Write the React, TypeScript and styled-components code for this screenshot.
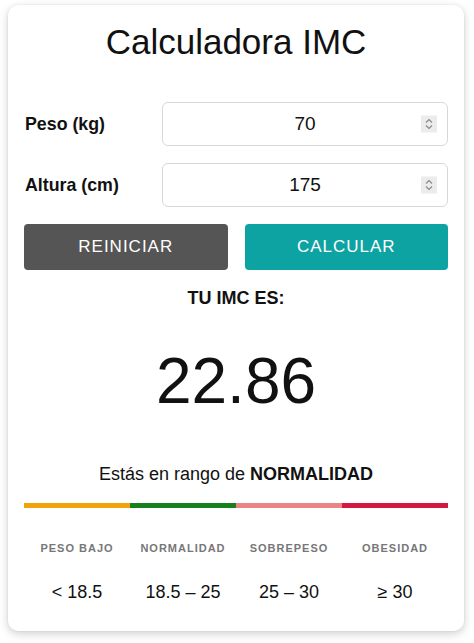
import React, { useState } from "react";
import styled, { createGlobalStyle } from "styled-components";

const GlobalStyle = createGlobalStyle`
  html, body {
    margin: 0;
    padding: 0;
    background: #ffffff;
  }
  body {
    font-family: "Liberation Sans", Arial, sans-serif;
    color: #111;
  }
`;

const Page = styled.div`
  padding: 5px 10px 13px 8px;
`;

const Card = styled.div`
  background: #fff;
  border-radius: 10px;
  box-shadow: 0 3px 10px rgba(0, 0, 0, 0.18), 0 0 3px rgba(0, 0, 0, 0.08);
  padding: 17px 16px 28px;
  display: flex;
  flex-direction: column;
`;

const Title = styled.h1`
  margin: 0 0 40px;
  font-size: 35px;
  font-weight: normal;
  text-align: center;
  line-height: 40px;
`;

const Form = styled.div`
  display: grid;
  grid-template-columns: 138px 1fr;
  row-gap: 17px;
  align-items: center;
`;

const Label = styled.label`
  font-size: 17.8px;
  font-weight: bold;
  padding-left: 1px;
`;

const Field = styled.div`
  position: relative;
  height: 44px;
  border: 1px solid #d8d8d8;
  border-radius: 6px;
  box-sizing: border-box;
`;

const Input = styled.input`
  width: 100%;
  height: 100%;
  border: none;
  outline: none;
  background: transparent;
  text-align: center;
  font-family: inherit;
  font-size: 19px;
  color: #111;
  padding: 0 30px;
  box-sizing: border-box;
`;

const Spinner = styled.span`
  position: absolute;
  right: 10px;
  top: 50%;
  transform: translateY(-50%);
  width: 16px;
  height: 17px;
  background: #ececec;
  display: flex;
  align-items: center;
  justify-content: center;
`;

const Buttons = styled.div`
  display: grid;
  grid-template-columns: 1fr 1fr;
  column-gap: 17px;
  margin-top: 17px;
`;

const Button = styled.button<{ $tone: "dark" | "teal" }>`
  height: 46px;
  border: none;
  border-radius: 4px;
  background: ${(p) => (p.$tone === "dark" ? "#555555" : "#0ea3a3")};
  color: #fff;
  font-family: inherit;
  font-size: 17px;
  letter-spacing: 1px;
  text-transform: uppercase;
  cursor: pointer;
`;

const ResultLabel = styled.div`
  margin-top: 17px;
  text-align: center;
  font-size: 18px;
  font-weight: bold;
  line-height: 22px;
`;

const Value = styled.div`
  margin-top: 36px;
  text-align: center;
  font-size: 64px;
  line-height: 72px;
`;

const Range = styled.div`
  margin-top: 46px;
  text-align: center;
  font-size: 18px;
  line-height: 22px;
  b {
    font-weight: bold;
  }
`;

const Bar = styled.div`
  margin-top: 18px;
  display: grid;
  grid-template-columns: repeat(4, 1fr);
  height: 5px;
`;

const Segment = styled.div<{ $color: string }>`
  background: ${(p) => p.$color};
`;

const Categories = styled.div`
  margin-top: 33px;
  display: grid;
  grid-template-columns: repeat(4, 1fr);
  row-gap: 26px;
  text-align: center;
`;

const CatName = styled.div`
  font-size: 11px;
  font-weight: bold;
  letter-spacing: 1px;
  color: #777;
  line-height: 14px;
`;

const CatValue = styled.div`
  font-size: 18px;
  line-height: 22px;
  color: #111;
`;

const SpinIcon = () => (
  <svg width="10" height="13" viewBox="0 0 10 13" fill="none" stroke="#8a8a8a" strokeWidth="1.2">
    <path d="M2 5 L5 2 L8 5" />
    <path d="M2 8 L5 11 L8 8" />
  </svg>
);

const categories = [
  { name: "PESO BAJO", range: "< 18.5", color: "#f0a30a" },
  { name: "NORMALIDAD", range: "18.5 – 25", color: "#15801c" },
  { name: "SOBREPESO", range: "25 – 30", color: "#e98585" },
  { name: "OBESIDAD", range: "≥ 30", color: "#d2193f" },
];

export default function App() {
  const [peso, setPeso] = useState("70");
  const [altura, setAltura] = useState("175");
  const [imc, setImc] = useState(22.86);

  const calcular = () => {
    const h = parseFloat(altura) / 100;
    const w = parseFloat(peso);
    if (h > 0 && w > 0) setImc(Math.round((w / (h * h)) * 100) / 100);
  };

  const reiniciar = () => {
    setPeso("");
    setAltura("");
  };

  const rango =
    imc < 18.5 ? "PESO BAJO" : imc < 25 ? "NORMALIDAD" : imc < 30 ? "SOBREPESO" : "OBESIDAD";

  return (
    <>
      <GlobalStyle />
      <Page>
        <Card>
          <Title>Calculadora IMC</Title>
          <Form>
            <Label>Peso (kg)</Label>
            <Field>
              <Input value={peso} onChange={(e) => setPeso(e.target.value)} />
              <Spinner>
                <SpinIcon />
              </Spinner>
            </Field>
            <Label>Altura (cm)</Label>
            <Field>
              <Input value={altura} onChange={(e) => setAltura(e.target.value)} />
              <Spinner>
                <SpinIcon />
              </Spinner>
            </Field>
          </Form>
          <Buttons>
            <Button $tone="dark" onClick={reiniciar}>Reiniciar</Button>
            <Button $tone="teal" onClick={calcular}>Calcular</Button>
          </Buttons>
          <ResultLabel>TU IMC ES:</ResultLabel>
          <Value>{imc.toFixed(2)}</Value>
          <Range>
            Estás en rango de <b>{rango}</b>
          </Range>
          <Bar>
            {categories.map((c) => (
              <Segment key={c.name} $color={c.color} />
            ))}
          </Bar>
          <Categories>
            {categories.map((c) => (
              <CatName key={c.name}>{c.name}</CatName>
            ))}
            {categories.map((c) => (
              <CatValue key={c.range}>{c.range}</CatValue>
            ))}
          </Categories>
        </Card>
      </Page>
    </>
  );
}
